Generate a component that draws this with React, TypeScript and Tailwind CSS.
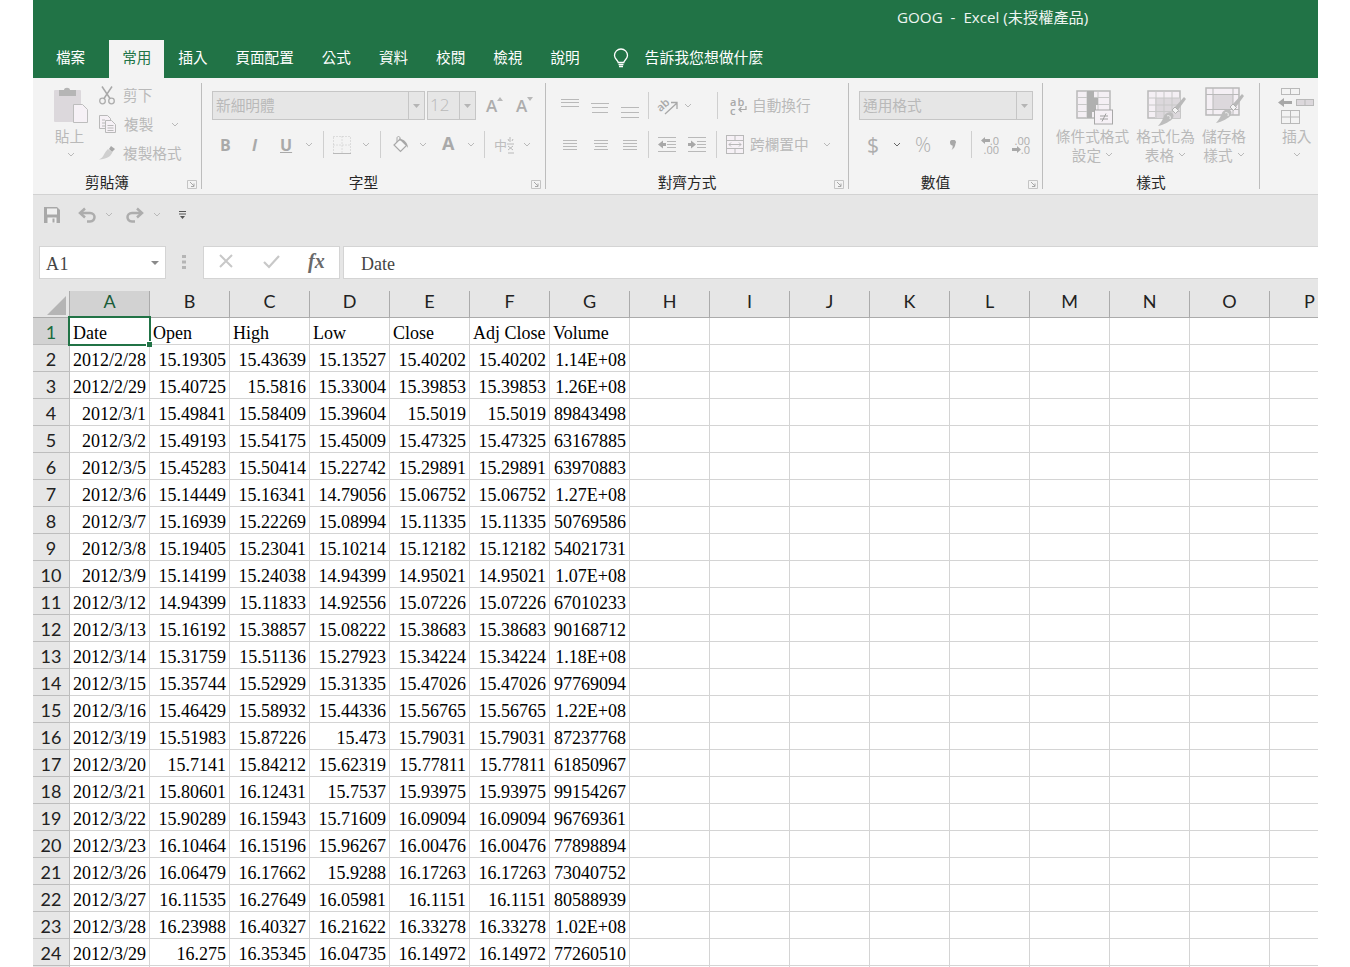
import React from "react";

const G = "#b9b9b9";
const data: string[][] = [
  ["2012/2/28","15.19305","15.43639","15.13527","15.40202","15.40202","1.14E+08"],
  ["2012/2/29","15.40725","15.5816","15.33004","15.39853","15.39853","1.26E+08"],
  ["2012/3/1","15.49841","15.58409","15.39604","15.5019","15.5019","89843498"],
  ["2012/3/2","15.49193","15.54175","15.45009","15.47325","15.47325","63167885"],
  ["2012/3/5","15.45283","15.50414","15.22742","15.29891","15.29891","63970883"],
  ["2012/3/6","15.14449","15.16341","14.79056","15.06752","15.06752","1.27E+08"],
  ["2012/3/7","15.16939","15.22269","15.08994","15.11335","15.11335","50769586"],
  ["2012/3/8","15.19405","15.23041","15.10214","15.12182","15.12182","54021731"],
  ["2012/3/9","15.14199","15.24038","14.94399","14.95021","14.95021","1.07E+08"],
  ["2012/3/12","14.94399","15.11833","14.92556","15.07226","15.07226","67010233"],
  ["2012/3/13","15.16192","15.38857","15.08222","15.38683","15.38683","90168712"],
  ["2012/3/14","15.31759","15.51136","15.27923","15.34224","15.34224","1.18E+08"],
  ["2012/3/15","15.35744","15.52929","15.31335","15.47026","15.47026","97769094"],
  ["2012/3/16","15.46429","15.58932","15.44336","15.56765","15.56765","1.22E+08"],
  ["2012/3/19","15.51983","15.87226","15.473","15.79031","15.79031","87237768"],
  ["2012/3/20","15.7141","15.84212","15.62319","15.77811","15.77811","61850967"],
  ["2012/3/21","15.80601","16.12431","15.7537","15.93975","15.93975","99154267"],
  ["2012/3/22","15.90289","16.15943","15.71609","16.09094","16.09094","96769361"],
  ["2012/3/23","16.10464","16.15196","15.96267","16.00476","16.00476","77898894"],
  ["2012/3/26","16.06479","16.17662","15.9288","16.17263","16.17263","73040752"],
  ["2012/3/27","16.11535","16.27649","16.05981","16.1151","16.1151","80588939"],
  ["2012/3/28","16.23988","16.40327","16.21622","16.33278","16.33278","1.02E+08"],
  ["2012/3/29","16.275","16.35345","16.04735","16.14972","16.14972","77260510"],
];
const headers = ["Date","Open","High","Low","Close","Adj Close","Volume"];
const cols = "ABCDEFGHIJKLMNOP".split("");

function Chev({ className = "", color = G }: { className?: string; color?: string }) {
  return (
    <svg width="8" height="5" viewBox="0 0 8 5" className={"shrink-0 " + className}>
      <path d="M1 1l3 3 3-3" fill="none" stroke={color} strokeWidth="1" />
    </svg>
  );
}
function Sep({ className = "" }: { className?: string }) {
  return <div className={"w-px h-[27px] bg-[#cfcfcf] shrink-0 " + className} />;
}
function Caret() {
  return <svg width="7" height="4" viewBox="0 0 7 4"><path d="M0 0h7L3.500 4z" fill="#b5b5b5" /></svg>;
}
function Launcher() {
  return (
    <svg width="10" height="9" viewBox="0 0 10 9" className="block">
      <path d="M.5 8.500V.5h9v8z" fill="none" stroke="#c4c4c4" />
      <path d="M3 2l4 4M7 3.500V6.500H4" fill="none" stroke="#a8a8a8" />
    </svg>
  );
}
function Group({ label, launcher, className, children }: { label: string; launcher?: boolean; className: string; children: React.ReactNode }) {
  return (
    <div className={"flex flex-col h-full border-r border-[#bdbdbd] shrink-0 " + className}>
      <div className="h-[92px]">{children}</div>
      <div className="flex h-[14px]">
        <div className="flex-1 text-center text-[14.67px] leading-[14px] text-[#262626] whitespace-nowrap">{label}</div>
        {launcher && <div className="w-[20px] pt-[5px] pl-[6px]"><Launcher /></div>}
      </div>
    </div>
  );
}
function Lines({ rows, w = 18, h = 24 }: { rows: [number, number, number][]; w?: number; h?: number }) {
  return (
    <svg width={w} height={h} viewBox={`0 0 ${w} ${h}`} className="shrink-0 block">
      {rows.map((r, i) => (
        <path key={i} d={`M${r[0]} ${r[2] + 0.5}H${r[1]}`} stroke={G} />
      ))}
    </svg>
  );
}
function Brush() {
  return (
    <g>
      <path d="M39 9l-8 11-3-3 9-10z" fill="#b9b9b9" />
      <path d="M28 17l3.500 3.500-3 3-3.500-3.500z" fill="#f3f3f3" stroke="#b0b0b0" />
      <path d="M20 23c4-2 8 1 6 5-2 3-9 7-15 8 3-3 5-7 6-10 .5-1.500 2-2.500 3-3z" fill="#bdbdbd" />
      <path d="M20 26c2-1 4 0 3 3" fill="none" stroke="#f3f3f3" />
    </g>
  );
}
function StyleIcon({ kind }: { kind: number }) {
  return (
    <svg width="40" height="38" viewBox="0 0 40 38" className="block">
      {kind === 2 ? (
        <g>
          <rect x="1" y="1" width="33" height="27" fill="#f4eff4" stroke={G} strokeWidth="1.500" />
          <rect x="8" y="7" width="20" height="15" fill="#dcd8dc" />
          <path d="M1 7.500h33M1 22.500h33M8 1v27M28 1v27" stroke={G} fill="none" />
        </g>
      ) : (
        <g>
          <rect x="1" y="1" width="32" height="27" fill="#f4eff4" stroke={G} strokeWidth="1.500" />
          <rect x="8" y="8" width="25" height="20" fill="#dcd8dc" />
          <path d="M1 8h32M1 15h32M1 21.500h32M9 1v27M17 1v27M25 1v27" stroke="#c8c8c8" fill="none" />
        </g>
      )}
      <Brush />
    </svg>
  );
}

export default function App() {
  return (
    <div className="w-[1350px] h-[967px] overflow-hidden bg-white pl-[33px] pr-[32px] font-['Open_Sans','Noto_Sans_CJK_TC',sans-serif]">
      {/* Title + tabs */}
      <div className="h-[78px] bg-[#217346] text-white">
        <div className="h-[40px] pl-[864px] pt-[6px] text-[15.2px] leading-[22px] text-[#eef5f1] whitespace-pre">GOOG  -  Excel (未授權產品)</div>
        <div className="h-[38px] flex text-[14.58px] leading-[34px] font-['Noto_Sans_CJK_TC',sans-serif] whitespace-nowrap">
          <div className="ml-[23px] mr-[24px]">檔案</div>
          <div className="px-[13px] bg-[#f3f3f3] text-[#217346]">常用</div>
          <div className="px-[14px]">插入</div>
          <div className="px-[14px]">頁面配置</div>
          <div className="px-[14px]">公式</div>
          <div className="px-[14px]">資料</div>
          <div className="px-[14px]">校閱</div>
          <div className="px-[14px]">檢視</div>
          <div className="px-[14px]">說明</div>
          <div className="ml-[19px] mr-[16px] pt-[8px]">
            <svg width="16" height="21" viewBox="0 0 16 21" className="block">
              <path d="M5.200 14.500c0-2-3.700-3.500-3.700-7a6.500 6.500 0 0 1 13 0c0 3.500-3.700 5-3.700 7z" fill="none" stroke="#fff" strokeWidth="1.300" />
              <path d="M5.500 16.500h5M6 18.500h4" stroke="#fff" strokeWidth="1.300" />
            </svg>
          </div>
          <div className="text-[14.85px]">告訴我您想做什麼</div>
        </div>
      </div>

      {/* Ribbon */}
      <div className="h-[117px] bg-[#f3f3f3] border-b border-[#d2d2d2] py-[5px] flex text-[14.67px] font-['Noto_Sans_CJK_TC',sans-serif] text-[#b9b9b9] whitespace-nowrap overflow-hidden">
        {/* Clipboard */}
        <Group label="剪貼簿" launcher className="w-[169px]">
          <div className="flex pt-[3px] pl-[21px]">
            <div className="w-[34px] flex flex-col items-center">
              <svg width="35" height="37" viewBox="0 0 35 37" className="block">
                <rect x="0" y="4" width="27" height="32" rx="1" fill="#dcd8dc" />
                <path d="M5 4h5c0-3 6-3 6 0h6v6H5z" fill="#b5b5b5" />
                <path d="M19.500 18.500h9l5 5v13h-14z" fill="#f6f1f6" stroke="#bdbdbd" />
              </svg>
              <div className="leading-[20px] mt-[3px] pr-[3px]">貼上</div>
              <Chev className="mt-[6px]" />
            </div>
            <div className="ml-[11px] -mt-[2px] flex flex-col gap-[7px]">
              <div className="h-[22px] flex items-center gap-[8px]">
                <svg width="16" height="19" viewBox="0 0 16 19" className="block">
                  <circle cx="3.500" cy="15" r="2.800" fill="none" stroke="#adadad" strokeWidth="1.300" />
                  <circle cx="12.500" cy="15" r="2.800" fill="none" stroke="#adadad" strokeWidth="1.300" />
                  <path d="M5 12.500L13 .5M11 12.500L3 .5" stroke="#a8a8a8" strokeWidth="1.500" fill="none" />
                </svg>
                <span>剪下</span>
              </div>
              <div className="h-[22px] flex items-center gap-[8px]">
                <svg width="17" height="18" viewBox="0 0 17 18" className="block">
                  <path d="M.5.5h8l3 3v10H.5z" fill="#f6f1f6" stroke={G} />
                  <path d="M6.500 5.500h6l4 4v8h-10z" fill="#f6f1f6" stroke={G} />
                  <path d="M3 5h3M3 8h3M3 11h3M8.500 10.500h6M8.500 13h6M8.500 15.500h6" stroke={G} />
                </svg>
                <span>複製</span>
                <Chev className="ml-[10px]" />
              </div>
              <div className="h-[22px] flex items-center gap-[8px]">
                <svg width="16" height="14" viewBox="0 0 16 14" className="block">
                  <path d="M12 0l4 3-3 3-3-3z" fill="#a8a8a8" />
                  <path d="M9 3l4.500 3.500L11 10c-3 2-7 3.500-11 3.500 2.500-1 4-3 5-5 1-2 2.500-4 4-5.500z" fill="#cfcfcf" />
                </svg>
                <span>複製格式</span>
              </div>
            </div>
          </div>
        </Group>

        {/* Font */}
        <Group label="字型" launcher className="w-[344px]">
          <div className="pt-[8px] pl-[10px] flex flex-col gap-[10px]">
            <div className="flex items-center h-[29px]">
              <div className="w-[213px] h-[29px] flex bg-[#e6e6e6] border border-[#c6c6c6]">
                <div className="flex-1 pl-[3px] leading-[25px]">新細明體</div>
                <div className="w-[16px] border-l border-[#c6c6c6] flex items-center justify-center"><Caret /></div>
              </div>
              <div className="ml-[2px] w-[49px] h-[29px] flex bg-[#e6e6e6] border border-[#c6c6c6]">
                <div className="flex-1 pl-[2px] leading-[26px] font-['Open_Sans',sans-serif] font-light text-[17px]">12</div>
                <div className="w-[16px] border-l border-[#c6c6c6] flex items-center justify-center"><Caret /></div>
              </div>
              <div className="ml-[10px] w-[30px] text-[17px] leading-[27px] font-['Open_Sans',sans-serif] font-semibold text-[#adadad] flex items-start">A<svg width="6" height="4" viewBox="0 0 6 4" className="mt-[5px]"><path d="M0 4h6L3 0z" fill={G} /></svg></div>
              <div className="text-[17px] leading-[27px] font-['Open_Sans',sans-serif] font-semibold text-[#adadad] flex items-start">A<svg width="6" height="4" viewBox="0 0 6 4" className="mt-[5px]"><path d="M0 0h6L3 4z" fill={G} /></svg></div>
            </div>
            <div className="flex items-center h-[29px] font-['Open_Sans',sans-serif] text-[#a9a9a9]">
              <span className="ml-[8px] w-[32px] font-bold text-[16px] leading-[20px]">B</span>
              <span className="w-[28px] italic font-bold text-[16px] leading-[20px]">I</span>
              <span className="w-[25px] font-bold text-[16px] leading-[20px] underline">U</span>
              <Chev />
              <Sep className="ml-[10px]" />
              <svg width="18" height="18" viewBox="0 0 18 18" className="ml-[9px] block">
                <rect x=".5" y=".5" width="17" height="17" fill="none" stroke="#c4c4c4" strokeDasharray="1 2" />
                <path d="M9 .5v17M.5 9h17" stroke="#c4c4c4" strokeDasharray="1 2" />
                <path d="M0 17.500h18" stroke={G} />
              </svg>
              <Chev className="ml-[11px]" />
              <Sep className="ml-[10px]" />
              <svg width="17" height="18" viewBox="0 0 17 18" className="ml-[11px] block">
                <path d="M8 3l6.500 6.500-6 6L2 9z" fill="#f6f6f6" stroke="#a8a8a8" strokeWidth="1.200" />
                <path d="M5 6V2c0-2 3-2 3 0v3" fill="none" stroke="#a8a8a8" />
                <path d="M8 3c4 0 8 4 8 9l-2-3z" fill="#a8a8a8" />
              </svg>
              <Chev className="ml-[10px]" />
              <span className="ml-[15px] w-[26px] font-bold text-[18px] leading-[20px] -mt-[3px]">A</span>
              <Chev className="-ml-[1px]" />
              <Sep className="ml-[9px]" />
              <span className="ml-[9px] w-[20px] flex items-center font-['Noto_Sans_CJK_TC',sans-serif] text-[#bdbdbd] text-[13px]">中<svg width="7" height="18" viewBox="0 0 7 18" className="shrink-0"><path d="M1 3l1 2M3 1v5M6 3L5 5M0 8h7M1 10l5 4M6 10l-5 4M1 17h6" stroke={G} fill="none" /></svg></span>
              <Chev className="ml-[9px]" />
            </div>
          </div>
        </Group>

        {/* Alignment */}
        <Group label="對齊方式" launcher className="w-[303px]">
          <div className="pt-[8px] flex flex-col gap-[10px]">
            <div className="flex items-center h-[29px] pl-[15px]">
              <div className="w-[30px]"><Lines rows={[[0,18,5],[0,18,8],[0,18,12]]} /></div>
              <div className="w-[30px]"><Lines rows={[[0,18,9],[1,17,13],[1,17,18]]} /></div>
              <div className="w-[27px]"><Lines rows={[[0,18,13],[0,18,18],[0,18,23]]} /></div>
              <Sep />
              <svg width="21" height="19" viewBox="0 0 21 19" className="ml-[8px] block overflow-visible">
                <text x="0" y="13" transform="rotate(-42 6 10)" fontSize="11" fontWeight="600" fontFamily="Open Sans, sans-serif" fill="#a8a8a8">ab</text>
                <path d="M8 18L20 7M14 6.500h6V13" fill="none" stroke="#a8a8a8" strokeWidth="1.300" />
              </svg>
              <Chev className="ml-[6px]" />
              <Sep className="ml-[25px]" />
              <div className="ml-[12px] w-[18px] font-['Open_Sans',sans-serif] font-semibold text-[11px] text-[#a8a8a8]">
                <div className="h-[9px] leading-[9px] tracking-[1px]">ab</div>
                <div className="h-[9px] leading-[9px] flex items-center">c
                  <svg width="10" height="8" viewBox="0 0 10 8" className="ml-[2px]"><path d="M9 0v3.500H2M4.500 1L2 3.500 4.500 6" fill="none" stroke="#a8a8a8" strokeWidth="1.200" /></svg>
                </div>
              </div>
              <span className="ml-[4px] -mt-[2px]">自動換行</span>
            </div>
            <div className="flex items-center h-[29px] pl-[17px]">
              <div className="w-[30px]"><Lines w={14} h={11} rows={[[0,14,1],[0,14,4],[0,14,7],[0,14,10]]} /></div>
              <div className="w-[30px]"><Lines w={16} h={11} rows={[[1,15,1],[1,15,4],[2,14,7],[1,15,10]]} /></div>
              <div className="w-[25px]"><Lines w={14} h={11} rows={[[0,14,1],[0,14,4],[0,14,7],[0,14,10]]} /></div>
              <Sep />
              <svg width="18" height="17" viewBox="0 0 18 17" className="ml-[9px] block">
                <path d="M0 1.500h18M9 5.500h9M9 8.500h9M9 11.500h9M0 15.500h18" stroke={G} />
                <path d="M0 8.500L5 4.500v2.500h3v3H5v2.500z" fill="#a8a8a8" />
              </svg>
              <svg width="18" height="17" viewBox="0 0 18 17" className="ml-[12px] block">
                <path d="M0 1.500h18M9 5.500h9M9 8.500h9M9 11.500h9M0 15.500h18" stroke={G} />
                <path d="M8 8.500L3 4.500v2.500H0v3h3v2.500z" fill="#a8a8a8" />
              </svg>
              <Sep className="ml-[10px]" />
              <svg width="18" height="19" viewBox="0 0 18 19" className="ml-[9px] block">
                <rect x=".5" y=".5" width="17" height="18" fill="#f6f1f6" stroke={G} />
                <path d="M.5 5.500h17M.5 13.500h17M9 .5v5M9 13.500v5M3 9.500h12M5 7.500l-2 2 2 2M13 7.500l2 2-2 2" stroke={G} fill="none" />
              </svg>
              <span className="ml-[6px] -mt-[2px]">跨欄置中</span>
              <Chev className="ml-[14px]" />
            </div>
          </div>
        </Group>

        {/* Number */}
        <Group label="數值" launcher className="w-[194px]">
          <div className="pt-[8px] pl-[10px] flex flex-col gap-[10px]">
            <div className="w-[174px] h-[29px] flex bg-[#e6e6e6] border border-[#c6c6c6]">
              <div className="flex-1 pl-[3px] leading-[25px]">通用格式</div>
              <div className="w-[16px] border-l border-[#c6c6c6] flex items-center justify-center"><Caret /></div>
            </div>
            <div className="flex items-center h-[29px] font-['Open_Sans',sans-serif] text-[#adadad]">
              <span className="ml-[8px] w-[25px] text-[21px] leading-[24px]">$</span>
              <Chev color="#666" className="ml-[1px]" />
              <span className="ml-[14px] w-[33px] text-[20px] font-light leading-[24px]">%</span>
              <svg width="6" height="10" viewBox="0 0 6 10" className="ml-[2px] block"><path d="M0 2.500a3 2.500 0 1 1 5.500 1C5.500 6 4 8.500 1.500 10c1-1.500 1.500-3 1-4.500C1 5.500 0 4.500 0 2.500z" fill="#a8a8a8" /></svg>
              <Sep className="ml-[15px]" />
              <div className="ml-[10px] w-[17px] flex flex-col items-end text-[11px]">
                <div className="h-[9px] leading-[9px] flex items-center"><svg width="9" height="7" viewBox="0 0 9 7"><path d="M0 3.500L4 0v2h5v3H4v2z" fill="#a8a8a8" /></svg>.0</div>
                <div className="h-[9px] leading-[9px]">.00</div>
              </div>
              <div className="ml-[14px] w-[17px] flex flex-col items-end text-[11px]">
                <div className="h-[9px] leading-[9px]">.00</div>
                <div className="h-[9px] leading-[9px] flex items-center"><svg width="9" height="7" viewBox="0 0 9 7"><path d="M9 3.500L5 0v2H0v3h5v2z" fill="#a8a8a8" /></svg>.0</div>
              </div>
            </div>
          </div>
        </Group>

        {/* Styles */}
        <Group label="樣式" className="w-[217px]">
          <div className="flex pl-[13px] pt-[7px] text-center leading-[19px]">
            <div className="w-[73px] flex flex-col items-center">
              <div className="h-[36px] pl-[4px]">
                <svg width="38" height="35" viewBox="0 0 38 35" className="block">
                  <rect x="1" y="1" width="33" height="27" fill="#f4eff4" stroke={G} strokeWidth="1.500" />
                  <path d="M1 7.500h33M1 14.500h33M1 21.500h33M11 1v27M22 1v27" stroke="#c8c8c8" fill="none" />
                  <rect x="11" y="1" width="7" height="7" fill="#b0b0b0" />
                  <rect x="11" y="8" width="11" height="7" fill="#b0b0b0" />
                  <rect x="11" y="15" width="9" height="7" fill="#b0b0b0" />
                  <rect x="11" y="22" width="5" height="6" fill="#b0b0b0" />
                  <rect x="18.500" y="20" width="18" height="14" fill="#f6f1f6" stroke="#a8a8a8" />
                  <path d="M24 26h8M24 29h8M30 23.500l-4 8" stroke="#a0a0a0" fill="none" />
                </svg>
              </div>
              <div>條件式格式</div>
              <div className="flex items-center gap-[4px]">設定<Chev /></div>
            </div>
            <div className="ml-[7px] w-[59px] flex flex-col items-center">
              <div className="h-[36px] pl-[3px]"><StyleIcon kind={1} /></div>
              <div>格式化為</div>
              <div className="flex items-center gap-[4px]">表格<Chev /></div>
            </div>
            <div className="ml-[7px] w-[44px] flex flex-col items-center">
              <div className="h-[36px] pl-[2px] -mt-[3px] mb-[3px]"><StyleIcon kind={2} /></div>
              <div>儲存格</div>
              <div className="flex items-center gap-[4px]">樣式<Chev /></div>
            </div>
          </div>
        </Group>

        {/* Cells */}
        <div className="w-[58px] h-full pl-[18px] pt-[5px]">
          <svg width="36" height="36" viewBox="0 0 36 36" className="block">
            <rect x="3.500" y=".5" width="18" height="6" fill="none" stroke={G} />
            <path d="M12.500.5v6" stroke={G} />
            <path d="M0 14.500L6 10v3h8v3H6v3z" fill="#a8a8a8" />
            <rect x="18.500" y="11.500" width="17" height="6" fill="#dcd8dc" stroke={G} />
            <path d="M27 11.500v6" stroke={G} />
            <rect x="3.500" y="22.500" width="18" height="13" fill="none" stroke={G} />
            <path d="M12.500 22.500v13M3.500 29h18" stroke={G} />
          </svg>
          <div className="mt-[2px] pl-[4px] leading-[20px]">插入</div>
          <Chev className="mt-[6px] ml-[15px]" />
        </div>
      </div>

      {/* Quick access */}
      <div className="h-[96px] bg-[#e6e6e6]">
        <div className="h-[51px] flex items-center pl-[11px] pb-[12px]">
          <svg width="16" height="16" viewBox="0 0 16 16" className="block">
            <path d="M0 0h13l3 3v13H0z" fill="#a8a8a8" />
            <rect x="3" y="1.500" width="10" height="6" fill="#efefef" />
            <rect x="3.500" y="10.500" width="9" height="5.500" fill="#efefef" />
            <rect x="8.500" y="11.500" width="2" height="4" fill="#a8a8a8" />
          </svg>
          <svg width="19" height="16" viewBox="0 0 19 16" className="ml-[18px] block">
            <path d="M7 1.500L2 6l5 4.500" fill="none" stroke="#adadad" strokeWidth="2.500" />
            <path d="M2.500 6H12c6 0 6 8 0 8.500H9" fill="none" stroke="#adadad" strokeWidth="2.500" />
          </svg>
          <Chev className="ml-[8px]" />
          <svg width="19" height="16" viewBox="0 0 19 16" className="ml-[12px] block">
            <path d="M12 1.500L17 6l-5 4.500" fill="none" stroke="#adadad" strokeWidth="2.500" />
            <path d="M16.500 6H7c-6 0-6 8 0 8.500h3" fill="none" stroke="#adadad" strokeWidth="2.500" />
          </svg>
          <Chev className="ml-[9px]" />
          <svg width="7" height="8" viewBox="0 0 7 8" className="ml-[18px] block">
            <path d="M0 .5h7M0 3h7" stroke="#555" />
            <path d="M1 5h5L3.500 8z" fill="#555" />
          </svg>
        </div>
        <div className="h-[33px] flex pl-[6px]">
          <div className="w-[127px] h-[33px] bg-white border border-[#d4d4d4] flex items-center pl-[6px] pr-[6px] font-['Liberation_Serif',serif] text-[18px] text-[#444]">
            <span className="flex-1 pt-[3px] tracking-[0.5px]">A1</span>
            <svg width="8" height="4" viewBox="0 0 8 4"><path d="M0 0h8L4 4z" fill="#8a8a8a" /></svg>
          </div>
          <svg width="4" height="14" viewBox="0 0 4 14" className="ml-[16px] mt-[9px] block">
            <path d="M0 0h4v3H0zM0 5.500h4v3H0zM0 11h4v3H0z" fill="#b5b5b5" />
          </svg>
          <div className="ml-[17px] w-[137px] h-[33px] bg-white border border-[#d4d4d4] flex items-center">
            <svg width="14" height="14" viewBox="0 0 14 14" className="ml-[15px] -mt-[3px] block">
              <path d="M1 1l12 12M13 1L1 13" stroke="#c8c8c8" strokeWidth="2" />
            </svg>
            <svg width="17" height="14" viewBox="0 0 17 14" className="ml-[30px] -mt-[1px] block">
              <path d="M1 7l5 5L16 1" fill="none" stroke="#c8c8c8" strokeWidth="2.200" />
            </svg>
            <span className="ml-[28px] font-['Liberation_Serif',serif] italic font-bold text-[20px] leading-[20px] text-[#6a6a6a] -mt-[3px]">fx</span>
          </div>
          <div className="ml-[3px] flex-1 h-[33px] bg-white border-y border-l border-[#d4d4d4] pl-[17px] font-['Liberation_Serif',serif] text-[18px] leading-[35px] text-[#444]">Date</div>
        </div>
      </div>

      {/* Sheet */}
      <div className="grid grid-cols-[37px_repeat(16,80px)] auto-rows-[27px] w-[1285px] overflow-hidden font-['Liberation_Serif',serif] text-[18px] leading-[26px] text-black whitespace-nowrap">
        <div className="bg-[#e6e6e6] border-r border-b border-[#ababab] flex items-end justify-end pr-[3px] pb-[2px]">
          <svg width="19" height="19" viewBox="0 0 19 19" className="block"><path d="M19 0v19H0z" fill="#b5b5b5" /></svg>
        </div>
        {cols.map((c, i) => (
          <div key={c} className={"flex items-center justify-center pb-[7px] border-b border-r border-[#ababab] font-['Lato',sans-serif] text-[18px] " + (i === 0 ? "bg-[#d2d2d2] text-[#1a5c38]" : "bg-[#e6e6e6] text-[#222]")}>{c}</div>
        ))}
        {[headers, ...data, []].map((row, r) => (
          <React.Fragment key={r}>
            <div className={"flex items-center justify-center pt-[1px] border-b border-r border-[#bdbdbd] font-['Lato',sans-serif] text-[18px] " + (r === 0 ? "bg-[#d2d2d2] text-[#1a6b40]" : "bg-[#e6e6e6] text-[#222]")}>{r < 24 ? r + 1 : ""}</div>
            {cols.map((_, c) => (
              <div key={c} className={"border-b border-r border-[#d4d4d4] px-[3px] pt-[2px] " + (r === 0 ? "text-left" : "text-right") + (r === 0 && c === 0 ? " relative" : "")}>
                {row[c] ?? ""}
                {r === 0 && c === 0 && (
                  <div className="absolute -left-[2px] -top-[2px] -right-[2px] -bottom-[2px] border-2 border-[#217346]">
                    <div className="absolute -right-[3px] -bottom-[3px] w-[6px] h-[6px] bg-[#217346] border-l border-t border-white" />
                  </div>
                )}
              </div>
            ))}
          </React.Fragment>
        ))}
      </div>
    </div>
  );
}
